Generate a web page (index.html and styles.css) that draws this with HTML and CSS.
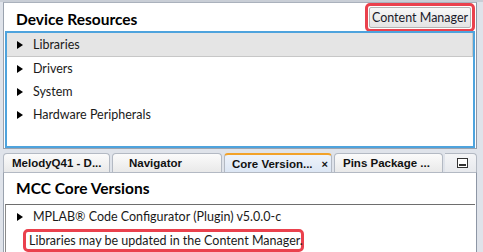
FILE: index.html
```html
<!DOCTYPE html>
<html>
<head>
<meta charset="utf-8">
<link rel="stylesheet" href="styles.css">
</head>
<body>
<div class="screen">
  <section class="panel panel-top">
    <header class="panel-head">
      <h1 class="panel-title">Device Resources</h1>
      <div class="highlight highlight-btn">
        <button class="btn">Content Manager</button>
      </div>
    </header>
    <div class="tree tree-blue">
      <div class="tree-row selected"><span class="tri"></span><span class="label">Libraries</span></div>
      <div class="tree-row"><span class="tri"></span><span class="label">Drivers</span></div>
      <div class="tree-row"><span class="tri"></span><span class="label">System</span></div>
      <div class="tree-row"><span class="tri"></span><span class="label">Hardware Peripherals</span></div>
    </div>
  </section>

  <nav class="tabs">
    <div class="tab tab-1">MelodyQ41 - D...</div>
    <div class="tab tab-2">Navigator</div>
    <div class="tab tab-active">Core Version... <span class="close">&#215;</span></div>
    <div class="tab tab-4">Pins Package ...</div>
    <div class="tab-rest"><span class="min-icon"></span></div>
  </nav>

  <section class="panel panel-bottom">
    <h2 class="panel-title title-2">MCC Core Versions</h2>
    <div class="tree tree-gray">
      <div class="tree-row"><span class="tri"></span><span class="label">MPLAB® Code Configurator (Plugin) v5.0.0-c</span></div>
      <div class="msg-row">
        <div class="highlight highlight-msg">Libraries may be updated in the Content Manager.</div>
      </div>
    </div>
  </section>
</div>
</body>
</html>
```
FILE: styles.css
```css
* { box-sizing: border-box; margin: 0; padding: 0; }
html, body { width: 483px; height: 252px; overflow: hidden; }
body {
  background: #dfe3ea;
  font-family: Lato, "Noto Sans", sans-serif;
  color: #1a1a1a;
}
.screen {
  display: flex;
  flex-direction: column;
  height: 252px;
  border-top: 2px solid #c9ced6;
}
.panel {
  background: #fff;
  margin-left: 3px;
  width: 474px;
  border-left: 1px solid #9aa2ae;
  border-right: 1px solid #8d96a5;
}
.panel-top {
  height: 148px;
  border-top: 1px solid #aab1bc;
  border-bottom: 1px solid #9aa2ae;
  display: flex;
  flex-direction: column;
}
.panel-head {
  height: 28px;
  display: flex;
  align-items: center;
  justify-content: space-between;
  padding-left: 12px;
  padding-right: 1px;
}
.panel-title {
  font-size: 15.5px;
  font-weight: bold;
  color: #000;
  margin-top: 4px;
}
.highlight {
  border: 3px solid #ea414d;
  border-radius: 5px;
}
.highlight-btn {
  padding: 1px;
  width: 110px;
  height: 29px;
  margin-top: 1px;
  display: flex;
}
.btn {
  font-family: inherit;
  font-size: 12.5px;
  color: #1a1a2a;
  width: 100%;
  height: 21px;
  padding: 0;
  border: 1px solid #b4b4b4;
  border-radius: 2px;
  background: linear-gradient(#f7f7f7, #e4e4e4);
}
.tree {
  flex: 1;
  margin: 0 1px;
}
.tree-blue {
  border: 2px solid #4ea3dd;
}
.tree-row {
  height: 23px;
  display: flex;
  align-items: center;
  padding-left: 10px;
  font-size: 12.5px;
}
.tree-blue .tree-row.selected {
  background: #e5e5e5;
  border-bottom: 1px solid #c7c7c7;
  border-right: 1px solid #c7c7c7;
  height: 24px;
}
.tri {
  width: 0;
  height: 0;
  border-top: 4px solid transparent;
  border-bottom: 4px solid transparent;
  border-left: 6px solid #000;
  margin-right: 10px;
}
.label { white-space: nowrap; }

.tabs {
  margin-top: 4px;
  margin-left: 3px;
  width: 474px;
  height: 19px;
  display: flex;
  align-items: flex-end;
  font-family: "Liberation Sans", Arial, sans-serif;
  font-weight: bold;
  font-size: 11.5px;
  color: #111;
}
.tab {
  height: 19px;
  width: 108px;
  padding-left: 8px;
  display: flex;
  align-items: center;
  border: 1px solid #b3b9c3;
  border-bottom: none;
  border-radius: 4px 4px 0 0;
  background: linear-gradient(#fbfbfb, #e9e9e9);
  margin-right: 2px;
  white-space: nowrap;
}
.tab-1 { width: 107px; }
.tab-2 { padding-left: 16px; width: 110px; }
.tab-active {
  width: 108px;
  border-top: 2px solid #f2a22a;
  background: linear-gradient(#eef3fb, #dce6f4);
  padding-left: 7px;
}
.close { font-size: 11px; margin-left: 9px; font-weight: bold; }
.tab-4 { width: 109px; padding-left: 8px; }
.tab-rest {
  flex: 1;
  height: 19px;
  display: flex;
  align-items: center;
  justify-content: flex-end;
  padding-right: 8px;
  border-top: 1px solid #b3b9c3;
  border-right: 1px solid #b3b9c3;
  border-radius: 0 4px 0 0;
  background: linear-gradient(#f4f5f7, #e7e9ed);
}
.min-icon {
  width: 11px;
  height: 10px;
  border: 1px solid #333;
  background: linear-gradient(to bottom, #fff 0, #fff 5px, #333 5px, #333 7px, #fff 7px);
  box-shadow: inset 0 0 0 1px #fff;
}

.panel-bottom {
  flex: 1;
  border-top: 1px solid #b3b9c3;
  display: flex;
  flex-direction: column;
}
.title-2 {
  height: 31px;
  margin: 0;
  padding: 6px 0 0 12px;
}
.tree-gray {
  border-top: 1px solid #6e6e6e;
  border-left: 1px solid #8a8a8a;
  margin-left: 1px;
}
.tree-gray .tree-row { padding-left: 11px; }
.msg-row {
  padding-left: 17px;
  padding-top: 1px;
}
.highlight-msg {
  width: 281px;
  height: 23px;
  font-size: 12.5px;
  display: flex;
  align-items: center;
  padding-left: 3px;
  white-space: nowrap;
}
```
